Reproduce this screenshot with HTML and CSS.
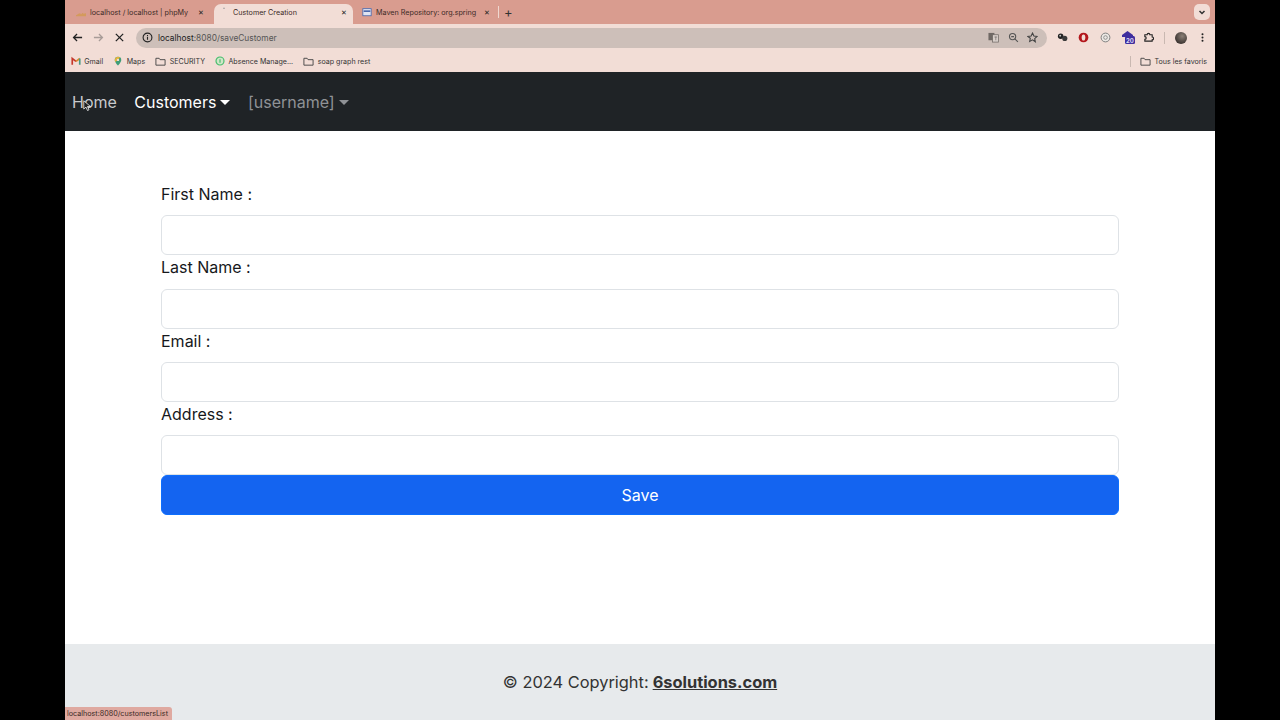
FILE: index.html
```html
<!DOCTYPE html>
<html lang="en">
<head>
  <meta charset="UTF-8">
  <title>Customer Creation</title>
  <link rel="stylesheet" href="styles.css">
</head>
<body>
  <div class="window">

    <div class="tabstrip">
      <div class="tab">
        <svg class="favicon" viewBox="0 0 12 12"><path d="M0 10c2-1 3-2.500 5-2.500l1 1.500 2-2 1 1 3-.5V11H0z" fill="#d49a5c"/></svg>
        <span class="tab-title">localhost / localhost | phpMy</span>
        <span class="tab-close">✕</span>
      </div>
      <div class="tab tab-active">
        <svg class="favicon" viewBox="0 0 12 12"><path d="M5 1h2v1H5z" fill="#999"/></svg>
        <span class="tab-title">Customer Creation</span>
        <span class="tab-close">✕</span>
      </div>
      <div class="tab">
        <svg class="favicon" viewBox="0 0 12 12"><rect x="1" y="2" width="10" height="8.500" fill="#dfe3f2" stroke="#4a68ac"/><path d="M2 4h8v2H2z" fill="#4a68ac"/></svg>
        <span class="tab-title">Maven Repository: org.spring</span>
        <span class="tab-close">✕</span>
      </div>
      <span class="tab-sep"></span>
      <span class="new-tab">+</span>
      <span class="tab-menu">
        <svg viewBox="0 0 10 10" width="10" height="10"><path d="M2.500 4l2.500 2.500L7.500 4" fill="none" stroke="#333" stroke-width="1.500"/></svg>
      </span>
    </div>

    <div class="toolbar">
      <svg class="tool" viewBox="0 0 12 12"><path d="M11 6H2M5.500 2.200L1.700 6l3.800 3.800" fill="none" stroke="#222" stroke-width="1.400"/></svg>
      <svg class="tool" viewBox="0 0 12 12"><path d="M1 6h9M6.500 2.200L10.300 6l-3.800 3.800" fill="none" stroke="#a89c98" stroke-width="1.400"/></svg>
      <svg class="tool" viewBox="0 0 12 12"><path d="M2 2l8 8M10 2l-8 8" fill="none" stroke="#222" stroke-width="1.400"/></svg>
      <div class="omnibox">
        <svg class="info" viewBox="0 0 12 12"><circle cx="6" cy="6" r="4.800" fill="none" stroke="#222" stroke-width="1.200"/><path d="M6 5.300v3.200M6 3.300v1" stroke="#222" stroke-width="1.200"/></svg>
        <span class="url"><span class="url-host">localhost</span>:8080/saveCustomer</span>
        <span class="omni-icons">
          <svg class="omni-icon" viewBox="0 0 12 12"><rect x=".5" y="1" width="6.500" height="8" fill="#6f6864"/><rect x="5" y="3" width="6.500" height="8" fill="#d8cfca" stroke="#6f6864" stroke-width=".8"/><path d="M7 5.500h3M8.500 5v4" stroke="#6f6864" stroke-width=".7"/></svg>
          <svg class="omni-icon" viewBox="0 0 12 12"><circle cx="5" cy="5" r="3.400" fill="none" stroke="#555" stroke-width="1.200"/><path d="M7.500 7.500l3.300 3.300M3.500 5h3" stroke="#555" stroke-width="1.200"/></svg>
          <svg class="omni-icon" viewBox="0 0 12 12"><path d="M6 1.200l1.500 3.200 3.500.4-2.600 2.400.7 3.500L6 8.600l-3.100 1.700.7-3.500L1 4.800l3.500-.4z" fill="none" stroke="#444" stroke-width="1.200"/></svg>
        </span>
      </div>
      <div class="extensions">
        <svg class="ext" viewBox="0 0 12 12"><circle cx="4" cy="4.500" r="3" fill="#222"/><circle cx="8.500" cy="7" r="2.800" fill="#3a3a3a"/><circle cx="3.500" cy="4" r="1" fill="#ccc"/></svg>
        <svg class="ext" viewBox="0 0 12 12"><circle cx="6" cy="6" r="5.300" fill="#b3161c"/><ellipse cx="6" cy="6" rx="2" ry="3.400" fill="#f1dcd4"/></svg>
        <svg class="ext ext-ring" viewBox="0 0 12 12"><circle cx="6" cy="6" r="4.800" fill="#ece8e4" stroke="#777"/><circle cx="6" cy="6" r="2" fill="none" stroke="#777" stroke-width=".8"/></svg>
        <svg class="ext-badge" viewBox="0 0 13 13"><path d="M5.500 0L11 4v2H0V4z" fill="#3f2e9e"/><rect x="3" y="5" width="10" height="8" rx="1.500" fill="#3f2e9e"/><text class="badge-text" x="8" y="11.500" text-anchor="middle">20</text></svg>
        <svg class="ext ext-puzzle" viewBox="0 0 12 12"><path d="M2 3h2.500a1.500 1.500 0 0 1 3 0H10v2.500a1.500 1.500 0 0 1 0 3V10H2V8a1.500 1.500 0 0 0 0-3z" fill="none" stroke="#222" stroke-width="1.200"/></svg>
        <span class="tool-sep"></span>
        <span class="avatar"></span>
        <svg class="ext" viewBox="0 0 12 12"><circle cx="6" cy="2.500" r="1.100" fill="#222"/><circle cx="6" cy="6" r="1.100" fill="#222"/><circle cx="6" cy="9.500" r="1.100" fill="#222"/></svg>
      </div>
    </div>

    <div class="bookmarks">
      <span class="bookmark">
        <svg class="bm-icon" viewBox="0 0 12 12"><path d="M1.500 10.500V3L6 6.500" fill="none" stroke="#c5392c" stroke-width="2"/><path d="M6 6.500L10.500 3" fill="none" stroke="#d98a2b" stroke-width="2"/><path d="M10.500 3v7.500" fill="none" stroke="#4a9a86" stroke-width="2"/></svg>
        Gmail
      </span>
      <span class="bookmark">
        <svg class="bm-icon" viewBox="0 0 12 12"><path d="M6 .8a3.900 3.900 0 0 0-3.900 3.900C2.100 7.500 6 11.500 6 11.500s3.900-4 3.900-6.800A3.900 3.900 0 0 0 6 .8z" fill="#3f9d78"/><path d="M2.400 3.300A3.900 3.900 0 0 1 6 .8c1 0 1.800.3 2.500 1L3 7.200c-.5-1-.9-1.800-.9-2.500z" fill="#e2b33c"/><circle cx="6" cy="4.700" r="1.400" fill="#f2ddd6"/></svg>
        Maps
      </span>
      <span class="bookmark">
        <svg class="folder" viewBox="0 0 12 12"><path d="M1 2.500h3.500L5.500 4H11v6H1z" fill="none" stroke="#444"/></svg>
        SECURITY
      </span>
      <span class="bookmark">
        <svg class="bm-icon" viewBox="0 0 12 12"><circle cx="6" cy="6" r="4.800" fill="#cfe6c8" stroke="#45bd6c" stroke-width="1.400"/><path d="M6 4v4" stroke="#45bd6c" stroke-width="1.400"/></svg>
        Absence Manage...
      </span>
      <span class="bookmark">
        <svg class="folder" viewBox="0 0 12 12"><path d="M1 2.500h3.500L5.500 4H11v6H1z" fill="none" stroke="#444"/></svg>
        soap graph rest
      </span>
      <span class="bookmarks-end">
        <span class="bm-sep"></span>
        <span class="bookmark">
          <svg class="folder" viewBox="0 0 12 12"><path d="M1 2.500h3.500L5.500 4H11v6H1z" fill="none" stroke="#444"/></svg>
          Tous les favoris
        </span>
      </span>
    </div>

    <nav class="navbar">
      <a class="nav-link nav-home">Home</a>
      <a class="nav-link nav-active dropdown">Customers</a>
      <a class="nav-link nav-muted dropdown">[username]</a>
    </nav>

    <main class="content">
      <form class="customer-form">
        <label class="form-label">First Name :</label>
        <input class="form-input" type="text">
        <label class="form-label">Last Name :</label>
        <input class="form-input" type="text">
        <label class="form-label">Email :</label>
        <input class="form-input" type="text">
        <label class="form-label">Address :</label>
        <input class="form-input" type="text">
        <button class="save-btn" type="button">Save</button>
      </form>
    </main>

    <footer class="footer">
      © 2024 Copyright: <a class="footer-link">6solutions.com</a>
    </footer>

    <div class="status-bubble">localhost:8080/customersList</div>
    <svg class="cursor" viewBox="0 0 12 16" width="9" height="12"><path d="M1 1v11l3-2.500 2 4.500 2-1-2-4.300h4z" fill="#222" stroke="#fff"/></svg>
  </div>
</body>
</html>
```

FILE: styles.css
```css
* {
  box-sizing: border-box;
}
html, body {
  margin: 0;
  height: 100%;
  background: #000;
  overflow: hidden;
}
body {
  font-family: Inter, "Liberation Sans", sans-serif;
}
.window {
  position: relative;
  width: 1150px;
  height: 720px;
  margin-left: 65px;
  display: flex;
  flex-direction: column;
  background: #fff;
}

/* browser chrome */
.tabstrip {
  height: 24px;
  flex: none;
  display: flex;
  align-items: flex-end;
  padding: 0 5px 0 2px;
  background: #d99c8f;
  font-size: 7.200px;
  color: #3c2a26;
}
.tab {
  width: 143px;
  height: 20px;
  display: flex;
  align-items: center;
  padding: 0 6px 4px 9px;
  gap: 4px;
}
.tab-active {
  width: 139px;
  margin-left: 4px;
  padding-left: 5px;
  background: #f2ddd6;
  border-radius: 7px 7px 0 0;
}
.favicon {
  width: 10px;
  height: 10px;
  flex: none;
}
.tab-title {
  flex: 1;
  white-space: nowrap;
}
.tab-close {
  font-size: 7px;
  color: #222;
}
.tab-sep {
  width: 1px;
  height: 12px;
  margin: 0 0 6px 2px;
  background: #f0d8d0;
}
.new-tab {
  margin: 0 0 4px 5px;
  font-size: 13px;
  line-height: 16px;
  color: #333;
}
.tab-menu {
  width: 16px;
  height: 16px;
  margin: 0 0 4px auto;
  display: flex;
  align-items: center;
  justify-content: center;
  border-radius: 5px;
  background: #f2ddd6;
}
.toolbar {
  height: 26px;
  flex: none;
  display: flex;
  align-items: center;
  padding: 1px 7px 0 7px;
  gap: 10px;
  background: #f2ddd6;
}
.tool {
  width: 11px;
  height: 11px;
  flex: none;
}
.omnibox {
  width: 911px;
  height: 20px;
  margin-left: 1px;
  display: flex;
  align-items: center;
  padding: 0 9px 0 6px;
  gap: 5px;
  border-radius: 10px;
  background: #cdbfb9;
  font-size: 8.350px;
  color: #555;
}
.url-host {
  color: #222;
}
.omni-icons {
  margin-left: auto;
  display: flex;
  gap: 8.500px;
}
.info {
  width: 11px;
  height: 11px;
}
.omni-icon {
  width: 11px;
  height: 11px;
}
.extensions {
  flex: 1;
  display: flex;
  align-items: center;
  gap: 10px;
}
.ext {
  width: 11px;
  height: 11px;
  flex: none;
}
.ext-ring {
  margin-left: 1px;
}
.ext-badge {
  width: 13px;
  height: 13px;
  flex: none;
  margin-left: 1px;
}
.badge-text {
  font-size: 6px;
  font-weight: 700;
  fill: #d9d8f5;
}
.ext-puzzle {
  margin-left: -2px;
}
.tool-sep {
  width: 1px;
  height: 12px;
  background: #c9b8b1;
}
.avatar {
  width: 12px;
  height: 12px;
  border-radius: 50%;
  background: radial-gradient(circle at 60% 35%, #8b7f76, #3f3734 70%);
}
.bookmarks {
  height: 22px;
  flex: none;
  display: flex;
  align-items: center;
  padding: 0 8px 0 6px;
  gap: 10.250px;
  background: #f2ddd6;
  font-size: 7.100px;
  color: #333;
}
.bookmark {
  display: flex;
  align-items: center;
  gap: 3.250px;
  white-space: nowrap;
}
.bm-icon {
  width: 10px;
  height: 10px;
  flex: none;
}
.folder {
  width: 11px;
  height: 11px;
  flex: none;
}
.bookmarks-end {
  margin-left: auto;
  display: flex;
  align-items: center;
  gap: 9px;
}
.bm-sep {
  width: 1px;
  height: 11px;
  background: #c9b8b1;
}

/* page */
.navbar {
  height: 59px;
  flex: none;
  display: flex;
  align-items: center;
  padding: 0 7px;
  gap: 17.500px;
  background: #1f2326;
  font-size: 16px;
}
.nav-home {
  color: #c8cacc;
}
.nav-active {
  color: #fff;
}
.nav-muted {
  color: #8f9296;
}
.dropdown::after {
  content: "";
  display: inline-block;
  margin-left: 4px;
  vertical-align: 3px;
  border-top: 5px solid;
  border-left: 5px solid transparent;
  border-right: 5px solid transparent;
}
.content {
  flex: 1;
  padding: 52.100px 96px 0;
}
.customer-form {
  display: flex;
  flex-direction: column;
}
.form-label {
  height: 32.250px;
  font-size: 16px;
  line-height: 23px;
  color: #16181b;
}
.form-input {
  width: 100%;
  height: 40px;
  margin-bottom: 1px;
  border: 1px solid #dee2e6;
  border-radius: 6px;
  background: #fff;
}
.save-btn {
  height: 39.500px;
  margin-top: -1px;
  border: 1px solid #0d6efd;
  border-radius: 6px;
  background: #1464f0;
  color: #fff;
  font-family: inherit;
  font-size: 16px;
}
.footer {
  height: 76px;
  flex: none;
  display: flex;
  align-items: center;
  justify-content: center;
  gap: 4px;
  background: #e7eaec;
  font-size: 16.400px;
  color: #333;
}
.footer-link {
  font-weight: 700;
  text-decoration: underline;
}

/* overlays */
.status-bubble {
  position: absolute;
  left: 0;
  bottom: 0;
  height: 13px;
  padding: 0 4px 0 2px;
  border-radius: 0 3px 0 0;
  background: #dfa9a0;
  font-size: 7.200px;
  line-height: 13px;
  color: #3a2a26;
}
.cursor {
  position: absolute;
  left: 18px;
  top: 100px;
}
```
